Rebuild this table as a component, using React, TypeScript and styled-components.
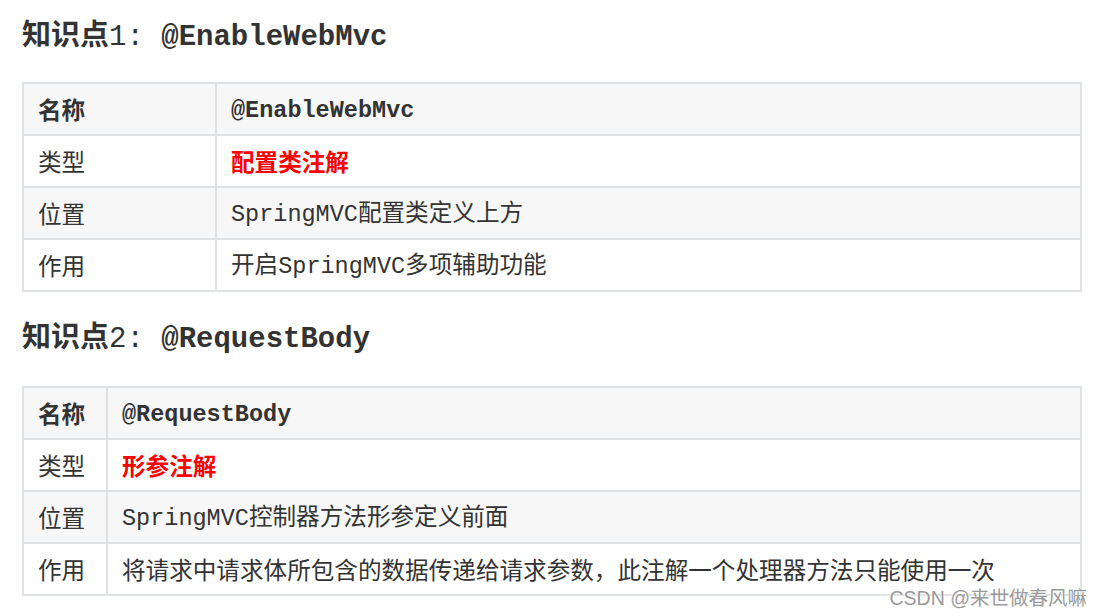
import { FC, ReactNode } from "react";
import styled, { createGlobalStyle } from "styled-components";

const GlobalStyle = createGlobalStyle`
  html, body {
    margin: 0;
    padding: 0;
    background: #ffffff;
  }
  body {
    font-family: "Noto Sans CJK SC", "Noto Sans", sans-serif;
    color: #333333;
  }
`;

const Page = styled.div`
  position: relative;
  width: 1101px;
  height: 616px;
  padding: 12px 19px 0 22px;
  box-sizing: border-box;
  overflow: hidden;
`;

const Heading = styled.h2<{ $gap: number; $after: number }>`
  margin: ${(p) => p.$gap}px 0 ${(p) => p.$after}px 0;
  height: 40px;
  line-height: 40px;
  font-size: 29px;
  font-weight: 700;
  color: #333333;
  white-space: nowrap;
`;

const Mono = styled.span<{ $bold?: boolean }>`
  font-family: "Liberation Mono", "Courier New", monospace;
  font-weight: ${(p) => (p.$bold ? 700 : 400)};
`;

const Table = styled.table`
  width: 1060px;
  border-collapse: collapse;
  table-layout: fixed;
  font-size: 23.6px;
`;

const Row = styled.tr<{ $striped?: boolean }>`
  background: ${(p) => (p.$striped ? "#f7f7f7" : "#ffffff")};
`;

const Cell = styled.td<{ $head?: boolean }>`
  border: 2px solid #dfe2e5;
  height: 52px;
  padding: 0 14px;
  box-sizing: border-box;
  line-height: 32px;
  font-weight: ${(p) => (p.$head ? 700 : 400)};
  color: #333333;
  white-space: nowrap;
  vertical-align: middle;
`;

const Code = styled.span<{ $bold?: boolean }>`
  font-family: "Liberation Mono", "Courier New", monospace;
  font-size: 23.5px;
  font-weight: ${(p) => (p.$bold ? 700 : 400)};
`;

const Red = styled.span`
  color: #ff0000;
  font-weight: 700;
`;

const Watermark = styled.div`
  position: absolute;
  right: 14px;
  bottom: 6px;
  font-family: "Liberation Sans", "Noto Sans CJK SC", sans-serif;
  font-size: 19.5px;
  line-height: 24px;
  color: #9a9a9a;
  text-shadow: 0 0 2px #ffffff, 0 0 2px #ffffff;
`;

type InfoRow = { label: string; value: ReactNode };

const InfoTable: FC<{ labelWidth: number; rows: InfoRow[] }> = ({
  labelWidth,
  rows,
}) => (
  <Table>
    <colgroup>
      <col style={{ width: labelWidth }} />
      <col />
    </colgroup>
    <tbody>
      {rows.map((r, i) => (
        <Row key={r.label} $striped={i % 2 === 0}>
          <Cell $head={i === 0}>{r.label}</Cell>
          <Cell>{r.value}</Cell>
        </Row>
      ))}
    </tbody>
  </Table>
);

const App: FC = () => (
  <>
    <GlobalStyle />
    <Page>
      <Heading $gap={0} $after={30}>
        知识点<Mono>1: </Mono>
        <Mono $bold>@EnableWebMvc</Mono>
      </Heading>
      <InfoTable
        labelWidth={193}
        rows={[
          { label: "名称", value: <Code $bold>@EnableWebMvc</Code> },
          { label: "类型", value: <Red>配置类注解</Red> },
          {
            label: "位置",
            value: (
              <>
                <Code>SpringMVC</Code>配置类定义上方
              </>
            ),
          },
          {
            label: "作用",
            value: (
              <>
                开启<Code>SpringMVC</Code>多项辅助功能
              </>
            ),
          },
        ]}
      />
      <Heading $gap={22} $after={32}>
        知识点<Mono>2: </Mono>
        <Mono $bold>@RequestBody</Mono>
      </Heading>
      <InfoTable
        labelWidth={84}
        rows={[
          { label: "名称", value: <Code $bold>@RequestBody</Code> },
          { label: "类型", value: <Red>形参注解</Red> },
          {
            label: "位置",
            value: (
              <>
                <Code>SpringMVC</Code>控制器方法形参定义前面
              </>
            ),
          },
          {
            label: "作用",
            value: "将请求中请求体所包含的数据传递给请求参数，此注解一个处理器方法只能使用一次",
          },
        ]}
      />
      <Watermark>CSDN @来世做春风嘛</Watermark>
    </Page>
  </>
);

export default App;
